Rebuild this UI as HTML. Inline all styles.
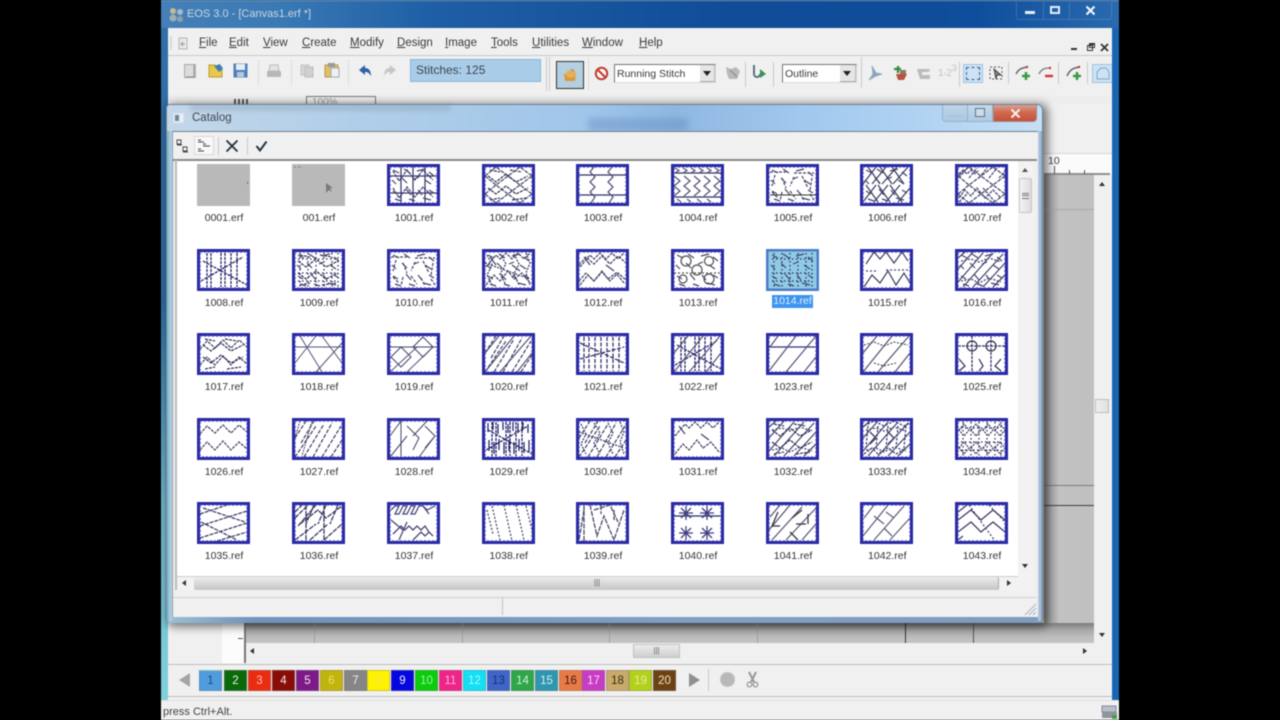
<!DOCTYPE html>
<html lang="en"><head><meta charset="utf-8"><title>EOS 3.0</title>
<style>
html,body{margin:0;padding:0;background:#000;width:1280px;height:720px;overflow:hidden}
*{box-sizing:border-box}
#r{position:absolute;left:0;top:0;width:1280px;height:720px;overflow:hidden;font-family:"Liberation Sans",sans-serif;color:#333;filter:blur(.5px)}
.a,.i,.m,.s,.ic{position:absolute}
.m{top:36px;font-size:11.5px;line-height:14px;color:#3a3a3a}
.i{width:54px;height:60px}
.i svg{position:absolute;left:0;top:0;width:53px;height:42px}
.i span{position:absolute;left:-10px;width:74px;top:47px;text-align:center;font-size:10.5px;line-height:14px;color:#333}
.s{top:670px;width:23px;height:21px;text-align:center;font-size:11.5px;line-height:21px;color:#eee;border:1px solid rgba(120,120,120,.35)}
.sep{position:absolute;width:1px;background:#c9c9c9}
.ic{overflow:visible}
defs g{stroke-width:1.25}
defs g#fr{stroke-width:1}
</style></head><body><div id="r">
<svg width="0" height="0" style="position:absolute"><defs>
<g id="fr"><rect x="1.500" y="1.500" width="50" height="39" fill="none" stroke="#2a2aa6" stroke-width="3.200"/><rect x="3.500" y="3.500" width="46" height="35" fill="none" stroke="#5c5cc4" stroke-width="1" stroke-dasharray="1 3"/></g>
<g id="a" fill="none" stroke="#45456e" stroke-width="1"><path d="M3 16 10 8 18 15 26 7 34 15 42 7 50 14M3 32 10 24 18 32 26 23 34 32 42 24 50 31" stroke-dasharray="3 1"/></g>
<g id="b" fill="none" stroke="#45456e"><path d="M3 20 14 3M9 25 22 3M3 39 24 8M12 39 32 6M21 39 40 5M30 39 49 8M39 39 50 22" stroke-dasharray="4 1.500"/></g>
<g id="c" fill="none" stroke="#55557a"><path d="M3 20 17 3M3 39 32 3M18 39 49 3M35 39 50 20"/></g>
<g id="c2" fill="none" stroke="#55557a"><path d="M3 14H50" stroke="#33337a"/><path d="M3 38 30 3M20 39 50 3M4 14 12 3M38 39 50 24"/></g>
<g id="d" fill="none" stroke="#44446a"><path d="M6 6 12 9M17 5 23 9M30 7 38 5M42 8 47 12M5 16 9 20M15 14 20 19M27 15 32 13M38 16 44 20M6 27 11 30M19 25 24 31M31 26 35 31M42 26 47 29M8 35 14 37M22 35 28 37M36 34 44 36" stroke-width="1.200"/></g>
<g id="d2" fill="none" stroke="#44446a"><path d="M4 8H20M28 9H48M9 11 6 22M16 14 20 24M28 13 24 22M36 12 42 24M46 14 44 26M6 28 12 34M16 28 14 37M24 27 30 35M34 29 38 37M44 30 48 36" stroke-dasharray="3 1.500"/></g>
<g id="e" fill="none" stroke="#22226e" stroke-width="1.600"><path d="M6 5V14M11 4V12M16 6V16M21 4V12M26 6V15M31 4V13M36 5V15M41 4V12M46 6V15M7 22V33M12 24V36M17 21V32M22 24V36M27 22V33M32 24V36M37 21V33M42 24V35M47 22V34"/></g>
<g id="f" fill="none" stroke="#3a3a70"><path d="M3 12H50M3 29H50M14 3V39M26 3V39M38 3V39"/><path d="M6 7 12 17 20 6 28 16 36 6 46 16M6 24 12 34 20 23 28 33 36 23 46 33" stroke-dasharray="3 1"/></g>
<g id="g" fill="none" stroke="#4a4a70"><path d="M3 12 14 3 26 12 38 3 50 12M3 12 14 21 26 12 38 21 50 12M3 30 14 21 26 30 38 21 50 30M3 30 14 39 26 30 38 39 50 30" stroke-dasharray="4 1"/></g>
<g id="g2" fill="none" stroke="#3d3d66"><path d="M3 20 16 3M12 20 26 3M22 20 37 3M33 20 48 3M8 3 20 20M20 3 32 20M32 3 44 20M3 38 16 21M14 38 28 21M26 38 40 21M38 38 50 24M6 21 18 38M18 21 30 38M30 21 42 38"/></g>
<g id="h" fill="none" stroke="#333366"><path d="M3 11H50M3 31H50" stroke-width="1.200"/><path d="M18 3 14 8 19 13 14 18 19 23 14 28 19 33 15 39M36 3 32 8 37 13 32 18 37 23 32 28 37 33 33 39" stroke="#55557a"/></g>
<g id="i" fill="none" stroke="#55557a"><path d="M3 9H50M3 33H50" stroke="#333366"/><path d="M4 4 8 6.500 4 9M12 4 16 6.500 12 9M20 4 24 6.500 20 9M28 4 32 6.500 28 9M36 4 40 6.500 36 9M44 4 48 6.500 44 9M3 12 9 17 3 22 9 27 3 32M13 12 19 17 13 22 19 27 13 32M23 12 29 17 23 22 29 27 23 32M33 12 39 17 33 22 39 27 33 32M43 12 49 17 43 22 49 27 43 32M6 35 10 38M16 35 20 38M26 35 30 38M36 35 40 38"/></g>
<g id="j" fill="none" stroke="#3d3d80"><path d="M3 14H50" stroke="#2a2a66"/><path d="M15 4V18M8 11H22M10 6 20 16M20 6 10 16M36 4V18M29 11H43M31 6 41 16M41 6 31 16M15 24V38M8 31H22M10 26 20 36M20 26 10 36M36 24V38M29 31H43M31 26 41 36M41 26 31 36"/></g>
<g id="k" fill="none" stroke="#33335c"><path d="M6 20 10 4 14 20M20 4 24 20 28 5M36 4 40 18 44 5M6 39 12 22 18 38M24 38 30 22 34 37M40 38 45 22 49 38M15 3V39M32 3V39"/></g>
<g id="l" fill="none" stroke="#44446a"><path d="M4 18 14 6 18 10 24 4 30 10 36 4 42 10 48 4M4 36 12 26 18 32 26 22 32 30 40 24 48 34" stroke-dasharray="3 1"/><path d="M8 8 14 16M30 16 38 22"/></g>
<g id="n" fill="none" stroke="#3d3d66"><path d="M3 24 50 9M3 12 30 3M3 36 50 21M20 39 50 30M6 6 48 20M4 20 40 38" stroke-dasharray="4 1"/></g>
<g id="o" fill="none" stroke="#444470"><path d="M3 9 10 3M3 20 18 3M3 33 28 4M8 38 38 4M18 38 48 5M28 38 50 14M38 38 50 26"/><path d="M6 12 16 10 24 13 34 9 46 13M6 32 16 30 24 34 34 29 46 33" stroke-dasharray="2 1.500" stroke-width="1.300"/></g>
<g id="q" fill="none" stroke="#44446a"><path d="M6 15 14 3 20 10 26 3 34 14 42 3 48 12M4 38 12 26 20 34 28 22 36 36 44 24 50 34"/><path d="M6 22H18M26 21H48" stroke-dasharray="2 2"/></g>
<g id="p" fill="none" stroke="#3d3d6a"><path d="M5 18 13 4 18 9 25 3M5 12 11 16 5 20M22 8 28 12 22 16M30 6 36 10 30 14M40 5 46 9 40 13M6 38 14 28 20 34 26 24 32 30 38 24 44 30M14 20 22 38M30 38 40 22"/></g>
<g id="u" fill="none" stroke="#33335c"><circle cx="17" cy="13" r="5"/><circle cx="36" cy="13" r="5"/><path d="M3 13H50M17 3V39M36 3V39" stroke-dasharray="3 1"/><path d="M4 26 10 33 4 38M46 26 40 33 46 38M24 26 28 33 24 38"/></g>
<g id="v" fill="none" stroke="#454575"><path d="M4 10 8 6 12 10 16 6 20 10 24 6M4 14 12 4M14 14 22 4M24 14 32 4M34 14 42 4M44 14 50 7M4 34 10 26 16 32 22 24 30 34 38 26 46 34M4 38 12 30M28 24 40 38" stroke-dasharray="3 1"/></g>
<g id="w" fill="none" stroke="#33336a"><path d="M4 8 14 3 24 8 34 3 44 8 50 5M4 36 12 30 18 36 28 30 36 36 46 30M8 8 6 30M18 8 16 30M28 8 26 30M38 8 36 30M46 8 44 30" stroke-dasharray="2.500 1.500" stroke-width="1.200"/><path d="M10 14 16 20 10 26M28 14 34 20 28 26"/></g>
<g id="x" fill="none" stroke="#3d3d66"><path d="M5 6 10 16 5 26 10 36M18 5 24 15 18 25 24 36M32 5 37 15 32 25 37 36M44 4 48 14 44 24 48 36M3 14 48 30" stroke-dasharray="2 1.200"/></g>
<g id="y" fill="none" stroke="#3d3d6a"><path d="M3 18 16 8 26 18 38 8 50 18M3 30 16 20 26 30 38 20 50 30M3 38 8 34M12 3 3 10"/><path d="M14 3 40 39M34 3 50 20" stroke-dasharray="2 2"/></g>
<g id="z" fill="none" stroke="#3d3d66"><path d="M4 12 9 6 14 12 9 18ZM16 12 21 6 26 12 21 18ZM28 12 33 6 38 12 33 18ZM40 12 45 6 50 12 45 18ZM4 30 9 24 14 30 9 36ZM16 30 21 24 26 30 21 36ZM28 30 33 24 38 30 33 36ZM40 30 45 24 50 30 45 36Z" stroke-dasharray="2 1"/></g>
<g id="b2" fill="none" stroke="#33335c"><path d="M3 10 10 3M3 16 16 3M6 24 24 3M22 3 14 22M34 3 26 22M46 3 38 22M8 22 26 8 34 16 50 4M3 38 24 22M18 38 36 22M32 38 50 22M14 3V39M32 3V39" stroke-dasharray="5 1"/></g>
<g id="b3" fill="none" stroke="#44447a"><path d="M4 8 8 4H12L8 12H12L16 4H20L16 12H20L24 4H28L24 12H28L32 4H36L42 12M36 4 40 8 48 4M4 18 16 28M20 20 12 38M6 32 14 24 18 28 22 24 26 28 30 24 34 28 38 24 42 30M26 38 34 30 38 34 42 30 46 34"/></g>
<g id="b4" fill="none" stroke="#44446a" stroke-dasharray="2 1.700"><path d="M10 4 18 38M22 3 30 39M34 3 42 38M5 8 11 32M44 4 50 28"/></g>
<g id="q2" fill="none" stroke="#44446a"><path d="M8 3V39M8 8 3 38M14 3 21 34 28 14 38 38 48 8M18 8 34 3 42 20M25 3V12M38 8V18" stroke-dasharray="5 1.200"/></g>
<g id="c3" fill="none" stroke="#55557a"><path d="M4 15 14 3M3 28 24 3M6 38 36 5M20 38 50 6M36 38 50 22"/><path d="M12 10 6 24H14M26 16 36 8M30 22 40 22M24 30 32 38M42 12V22" stroke="#333"/></g>
<g id="c4" fill="none" stroke="#60607a"><path d="M4 16 14 3M3 34 28 3M14 38 44 4M30 38 50 16M14 14 24 22M26 10 34 16M24 26 32 34"/></g>
<g id="s1" fill="none" stroke="#2f2f5a" stroke-width="1.200"><path d="M6 10H46M6 24H46M6 32H46M8 4V38M16 4V38M24 4V38M32 4V38M40 4V38M46 4V38" stroke-dasharray="1.500 2.500"/></g>
<g id="s2" fill="none" stroke="#2f2f68" stroke-width="1.400"><path d="M8 4V38M13 4V38M19 4V38M25 4V38M31 4V38M37 4V38M43 4V38M4 10 48 30M4 26 48 14" stroke-dasharray="4 1.500"/></g>
<g id="s3" fill="none" stroke="#1e1e66" stroke-width="1.500"><path d="M10 4V38M14 4V38M24 4V38M28 4V38M34 4V38M40 4V38M6 12 50 36M4 32 46 8" stroke-dasharray="3 1"/></g>
<g id="s4" fill="none" stroke="#33335a" stroke-width="1.500"><path d="M6 12 14 18 24 10 34 18 46 12M6 24 14 30 24 22 34 30 46 24M8 6 18 8M28 6 40 8M8 36 18 34M30 36 44 34" stroke-dasharray="3 1"/></g>
<g id="s5" fill="#3a3a70"><circle cx="15" cy="12" r="5" fill="none" stroke="#555"/><circle cx="38" cy="12" r="4.500" fill="none" stroke="#555"/><circle cx="26" cy="21" r="5" fill="none" stroke="#555"/><circle cx="12" cy="30" r="4" fill="none" stroke="#555"/><circle cx="38" cy="30" r="5" fill="none" stroke="#555"/><path d="M3 24H50" fill="none" stroke="#555" stroke-dasharray="2 2"/></g>
</defs></svg>

<!-- main window -->
<div class="a" style="left:161px;top:0;width:958px;height:720px;background:linear-gradient(90deg,#2f6ea6,#2f6ea6 7px,#1a6ab9 7px)"></div>
<div class="a" style="left:161px;top:300px;width:7px;height:400px;background:linear-gradient(180deg,#2f6ea6,#6fb9cf 50%,#7fd0de)"></div>
<div class="a" style="left:1112px;top:28px;width:7px;height:672px;background:#1765b3"></div>
<div class="a" style="left:161px;top:0;width:958px;height:28px;border-top:1px solid #7aa6d2;background:linear-gradient(90deg,#4580b7 0,#3a7ab5 12%,#1f5fa6 28%,#104c98 60%,#0f4e9c 85%,#2a6aae 100%)"></div>
<!-- app icon -->
<svg class="ic" style="left:168px;top:7px" width="17" height="16"><circle cx="5" cy="4" r="3" fill="#c9b98c"/><circle cx="12" cy="5" r="3" fill="#a8b8c4"/><circle cx="5" cy="11" r="3.500" fill="#9eb0b4"/><circle cx="12" cy="12" r="3" fill="#8aa0a8"/></svg>
<div class="a" style="left:187px;top:7px;font-size:11px;line-height:15px;color:#cbd6e2">EOS 3.0 - [Canvas1.erf *]</div>
<!-- caption buttons -->
<div class="a" style="left:1016px;top:2px;width:96px;height:18px;border:1px solid rgba(170,200,230,.22);border-top:0;border-radius:0 0 3px 3px"></div>
<div class="a" style="left:1043px;top:2px;width:1px;height:17px;background:rgba(170,200,230,.22)"></div>
<div class="a" style="left:1069px;top:2px;width:1px;height:17px;background:rgba(170,200,230,.22)"></div>
<div class="a" style="left:1025px;top:11px;width:10px;height:3px;background:#e6eef6"></div>
<div class="a" style="left:1050px;top:6px;width:10px;height:8px;border:2px solid #e6eef6"></div>
<svg class="ic" style="left:1085px;top:5px" width="11" height="11"><path d="M1.500 1.500 9.500 9.500M9.500 1.500 1.500 9.500" stroke="#eef3f8" stroke-width="2.200"/></svg>

<!-- client -->
<div class="a" style="left:168px;top:28px;width:944px;height:672px;background:#f0f0f0"></div>
<div class="a" style="left:168px;top:55px;width:944px;height:1px;background:#c8c8c8"></div>
<div class="a" style="left:170px;top:36px;width:2px;height:14px;background:#d8d8d8"></div>
<svg class="ic" style="left:177px;top:37px" width="12" height="13"><path d="M2 1H10V12H2Z" fill="#e8e8e8" stroke="#b5b5b5"/><path d="M4 7H8M4 7 6 5M4 7 6 9" stroke="#999" fill="none"/></svg>
<div class="m" style="left:199px"><u>F</u>ile</div>
<div class="m" style="left:229px"><u>E</u>dit</div>
<div class="m" style="left:263px"><u>V</u>iew</div>
<div class="m" style="left:302px"><u>C</u>reate</div>
<div class="m" style="left:350px"><u>M</u>odify</div>
<div class="m" style="left:397px"><u>D</u>esign</div>
<div class="m" style="left:445px"><u>I</u>mage</div>
<div class="m" style="left:491px"><u>T</u>ools</div>
<div class="m" style="left:532px"><u>U</u>tilities</div>
<div class="m" style="left:582px"><u>W</u>indow</div>
<div class="m" style="left:639px"><u>H</u>elp</div>
<!-- mdi buttons -->
<div class="a" style="left:1071px;top:48px;width:6px;height:2px;background:#333"></div>
<div class="a" style="left:1087px;top:45px;width:6px;height:6px;border:1px solid #333;background:#f0f0f0"></div>
<div class="a" style="left:1089px;top:43px;width:6px;height:5px;border:1px solid #333;border-top-width:2px"></div>
<svg class="ic" style="left:1100px;top:43px" width="9" height="9"><path d="M1 1 8 8M8 1 1 8" stroke="#333" stroke-width="1.700"/></svg>

<!-- toolbar -->
<svg class="ic" style="left:183px;top:63px" width="14" height="16"><rect x="1.500" y="1.500" width="11" height="13" fill="#dcdcdc" stroke="#aaa"/><path d="M11 2V14H3" stroke="#888" fill="none"/></svg>
<svg class="ic" style="left:208px;top:62px" width="16" height="16"><path d="M1 3H7L8 5H14V15H1Z" fill="#e7c94e" stroke="#c09a30"/><path d="M6 4 12 2 15 7 11 10" fill="#3f7fb5"/></svg>
<svg class="ic" style="left:233px;top:63px" width="15" height="15"><rect x=".5" y=".5" width="14" height="14" fill="#4d80ba"/><rect x="3" y="1" width="9" height="6" fill="#e8eef5"/><rect x="4" y="9" width="7" height="5" fill="#b7c8da"/></svg>
<div class="sep" style="left:258px;top:60px;height:25px;background:#dcdcdc"></div>
<svg class="ic" style="left:266px;top:64px" width="16" height="14"><path d="M4 1H12L13 7H3Z" fill="#e4e4e4" stroke="#bbb"/><rect x="1" y="7" width="14" height="6" rx="1" fill="#b4b8bc"/></svg>
<div class="sep" style="left:291px;top:60px;height:25px;background:#dcdcdc"></div>
<svg class="ic" style="left:300px;top:64px" width="15" height="14"><rect x="1" y="1" width="8" height="10" fill="#d6d6d6" stroke="#c4c4c4"/><rect x="5" y="3" width="8" height="10" fill="#d0d0d0" stroke="#bdbdbd"/></svg>
<svg class="ic" style="left:324px;top:62px" width="16" height="16"><rect x="1" y="3" width="13" height="12" fill="#dfc06a" stroke="#b89a48"/><rect x="4" y="1" width="7" height="4" fill="#999"/><rect x="7" y="6" width="8" height="9" fill="#eef0f4" stroke="#a8a8a8"/></svg>
<div class="sep" style="left:348px;top:60px;height:25px;background:#dcdcdc"></div>
<svg class="ic" style="left:358px;top:64px" width="14" height="13"><path d="M1 6 7 1V4C11 4 13 7 13 12 11 9 10 8 7 8V11Z" fill="#2f62a8"/></svg>
<svg class="ic" style="left:383px;top:64px" width="14" height="13"><path d="M13 6 7 1V4C3 4 1 7 1 12 3 9 4 8 7 8V11Z" fill="#c6c6c6"/></svg>
<div class="a" style="left:410px;top:59px;width:131px;height:23px;background:#a9cde9;border:1px solid #86b8e2;font-size:12px;line-height:21px;padding-left:5px;color:#3d4650">Stitches: 125</div>
<div class="sep" style="left:546px;top:57px;height:34px"></div><div class="sep" style="left:549px;top:57px;height:34px"></div>
<div class="a" style="left:556px;top:61px;width:28px;height:28px;background:#b3cfe0;border:1px solid #333"></div>
<svg class="ic" style="left:562px;top:67px" width="16" height="16"><path d="M2 7H14L13 14H3Z" fill="#d89a3c"/><ellipse cx="9" cy="7" rx="5" ry="4" fill="#e8ad56"/><path d="M9 2 12 4" stroke="#888"/></svg>
<div class="sep" style="left:588px;top:58px;height:32px;background:#dcdcdc"></div>
<svg class="ic" style="left:594px;top:66px" width="15" height="15"><circle cx="7.500" cy="7.500" r="5.700" fill="#f8f8f8" stroke="#c33c30" stroke-width="2"/><path d="M3.500 3.500 11.500 11.500" stroke="#c33c30" stroke-width="2"/></svg>
<div class="a" style="left:614px;top:64px;width:102px;height:19px;background:#fff;border:1px solid #d8d8d8;border-left:1px solid #777;border-top:1px solid #777;font-size:10.500px;line-height:18px;padding-left:2px;color:#3a3a3a">Running Stitch</div>
<div class="a" style="left:700px;top:65px;width:15px;height:17px;background:#e6e6e6;border-bottom:1px solid #aaa;border-right:1px solid #bbb"></div>
<svg class="ic" style="left:703px;top:71px" width="9" height="5"><path d="M0 0H8L4 5Z" fill="#222"/></svg>
<svg class="ic" style="left:725px;top:65px" width="16" height="16"><path d="M1 2 6 4 11 2 15 6 12 14 4 14 2 9Z" fill="#b9b9b9"/><path d="M5 5 12 12" stroke="#888"/></svg>
<div class="sep" style="left:745px;top:62px;height:25px"></div>
<svg class="ic" style="left:750px;top:64px" width="17" height="18"><path d="M4 1V10A3 3 0 0 0 10 10" fill="none" stroke="#5a7088" stroke-width="2"/><path d="M10 5 16 10 10 14Z" fill="#3b8f55"/></svg>
<div class="sep" style="left:773px;top:62px;height:25px"></div>
<div class="a" style="left:782px;top:64px;width:75px;height:19px;background:#fff;border:1px solid #d8d8d8;border-left:1px solid #777;border-top:1px solid #777;font-size:10.500px;line-height:18px;padding-left:2px;color:#3a3a3a">Outline</div>
<div class="a" style="left:840px;top:65px;width:16px;height:17px;background:#e6e6e6;border-bottom:1px solid #aaa;border-right:1px solid #bbb"></div>
<svg class="ic" style="left:843px;top:71px" width="9" height="5"><path d="M0 0H8L4 5Z" fill="#222"/></svg>
<div class="sep" style="left:861px;top:57px;height:31px"></div>
<svg class="ic" style="left:867px;top:65px" width="16" height="16"><path d="M5 1 9 8 15 9 9 11 2 15 6 9Z" fill="#7fa6c8" stroke="#9ab"/></svg>
<svg class="ic" style="left:892px;top:64px" width="17" height="17"><path d="M6 2V9M2 5H9" stroke="#3a8a3e" stroke-width="2.300"/><path d="M4 10H15L12 16H6Z" fill="#b8533d"/><path d="M8 6H14V10H8Z" fill="#8a7a5a"/></svg>
<svg class="ic" style="left:916px;top:68px" width="15" height="12"><path d="M1 1H14L13 4H6V7H14V11H4Z" fill="#bcbcbc"/></svg>
<div class="a" style="left:938px;top:67px;font-size:10px;line-height:12px;color:#c2c2c2">1<span style="position:relative;top:-2px">,</span>2<span style="position:relative;top:-5px;font-size:9px">3</span></div>
<div class="sep" style="left:959px;top:62px;height:25px"></div>
<div class="a" style="left:963px;top:64px;width:20px;height:19px;background:#cde2f3;border:1px solid #9cc6e8"></div>
<div class="a" style="left:966px;top:67px;width:14px;height:13px;border:1px dashed #3a5f8a"></div>
<svg class="ic" style="left:988px;top:65px" width="16" height="16"><rect x="2" y="2" width="12" height="12" fill="none" stroke="#555" stroke-dasharray="2 2"/><path d="M6 4 13 10 9 10 8 14Z" fill="#888" stroke="#444"/></svg>
<div class="sep" style="left:1008px;top:62px;height:22px"></div>
<svg class="ic" style="left:1015px;top:65px" width="17" height="17"><path d="M1 9C4 3 8 3 12 2" fill="none" stroke="#666" stroke-width="1.500"/><path d="M11 7V15M7 11H15" stroke="#3a9a40" stroke-width="2.500"/><circle cx="12" cy="2" r="1.200" fill="#c33"/></svg>
<svg class="ic" style="left:1038px;top:65px" width="16" height="16"><path d="M1 9C4 3 8 3 12 3" fill="none" stroke="#888" stroke-width="1.500"/><path d="M7 11H15" stroke="#d33a3a" stroke-width="2.500"/><circle cx="12" cy="3" r="1.200" fill="#c33"/></svg>
<div class="sep" style="left:1058px;top:62px;height:22px"></div>
<svg class="ic" style="left:1066px;top:65px" width="17" height="17"><path d="M1 11C4 4 8 3 13 2" fill="none" stroke="#666" stroke-width="1.500"/><path d="M11 7V15M7 11H15" stroke="#3a9a40" stroke-width="2.500"/><circle cx="13" cy="2" r="1.200" fill="#c33"/></svg>
<div class="sep" style="left:1087px;top:62px;height:22px"></div>
<div class="a" style="left:1092px;top:64px;width:20px;height:19px;background:#cde2f3;border:1px solid #9cc6e8;border-right:0"></div>
<svg class="ic" style="left:1096px;top:67px" width="14" height="13"><path d="M1 12V5L5 1H10L13 5V12Z" fill="none" stroke="#7fa8cc"/></svg>

<!-- second toolbar hint -->
<div class="a" style="left:168px;top:96px;width:944px;height:8px;background:#ededed"></div>
<div class="a" style="left:306px;top:96px;width:70px;height:10px;border:1px solid #777;border-bottom:0;font-size:10px;line-height:12px;color:#999;padding-left:5px">100%</div>
<div class="a" style="left:234px;top:99px;width:16px;height:5px;background:repeating-linear-gradient(90deg,#555 0 2px,transparent 2px 4px)"></div>

<!-- canvas right -->
<div class="a" style="left:1044px;top:153px;width:68px;height:21px;background:#fbfbfb;border-top:1px solid #d4d4d4"></div>
<div class="a" style="left:1044px;top:173px;width:66px;height:2px;background:#8f8f8f"></div>
<div class="a" style="left:1048px;top:155px;font-size:10.500px;line-height:12px;color:#444">10</div>
<div class="a" style="left:1054px;top:166px;width:1px;height:8px;background:#555"></div>
<div class="a" style="left:1069px;top:170px;width:1px;height:4px;background:#555"></div>
<div class="a" style="left:1084px;top:170px;width:1px;height:4px;background:#555"></div>
<div class="a" style="left:1044px;top:175px;width:50px;height:468px;background:linear-gradient(90deg,#8d8d8d 0,#a8a8a8 6px,#b6b6b6 12px,#c2c2c2 15px,#c0c0c0 100%)"></div>
<div class="a" style="left:1044px;top:209px;width:50px;height:1px;background:#a9a9a9"></div>
<div class="a" style="left:1044px;top:485px;width:50px;height:1px;background:#7c7c7c"></div>
<div class="a" style="left:1044px;top:505px;width:50px;height:1px;background:#3e3e3e"></div>
<svg class="ic" style="left:1098px;top:181px" width="8" height="6"><path d="M4 1 7 5H1Z" fill="#333"/></svg>
<svg class="ic" style="left:1098px;top:632px" width="8" height="6"><path d="M4 5 7 1H1Z" fill="#333"/></svg>
<div class="a" style="left:1095px;top:399px;width:14px;height:14px;background:linear-gradient(90deg,#efefef,#e0e0e0);border:1px solid #bcbcbc"></div>

<!-- bottom canvas -->
<div class="a" style="left:222px;top:623px;width:23px;height:40px;background:#fcfcfc"></div>
<div class="a" style="left:244px;top:623px;width:2px;height:40px;background:#777"></div>
<div class="a" style="left:238px;top:638px;width:5px;height:1px;background:#555"></div>
<div class="a" style="left:246px;top:623px;width:848px;height:20px;background:linear-gradient(180deg,#7e7e7e 0,#a8a8a8 7px,#bdbdbd 14px,#c3c3c3)"></div>
<div class="a" style="left:314px;top:623px;width:1px;height:20px;background:#a0a0a0"></div>
<div class="a" style="left:462px;top:623px;width:1px;height:20px;background:#a0a0a0"></div>
<div class="a" style="left:609px;top:623px;width:1px;height:20px;background:#a0a0a0"></div>
<div class="a" style="left:757px;top:623px;width:1px;height:20px;background:#a0a0a0"></div>
<div class="a" style="left:905px;top:623px;width:1px;height:20px;background:#333"></div>
<div class="a" style="left:973px;top:623px;width:1px;height:20px;background:#555"></div>
<svg class="ic" style="left:249px;top:647px" width="6" height="8"><path d="M1 4 5 1V7Z" fill="#333"/></svg>
<svg class="ic" style="left:1082px;top:647px" width="6" height="8"><path d="M5 4 1 1V7Z" fill="#333"/></svg>
<div class="a" style="left:633px;top:644px;width:47px;height:14px;background:linear-gradient(180deg,#ececec,#cfcfcf);border:1px solid #c2c2c2;font-size:8px;line-height:11px;text-align:center;color:#666">|||</div>
<div class="a" style="left:168px;top:664px;width:944px;height:1px;background:#bdbdbd"></div>
<div class="a" style="left:168px;top:696px;width:944px;height:1px;background:#bdbdbd"></div>
<div class="a" style="left:161px;top:700px;width:958px;height:20px;background:#f0f0f0;border-top:1px solid #e0e0e0"></div>

<!-- palette -->
<svg class="ic" style="left:178px;top:672px" width="13" height="16"><path d="M12 1V15L1 8Z" fill="#a6a6a6"/></svg>
<div class="s" style="left:199px;background:#4f9ddd;color:#234b7a;border-top:1px solid #8bb">1</div>
<div class="s" style="left:224px;background:#0a6a0a">2</div>
<div class="s" style="left:248px;background:#ea2d12;color:#f4c0a8">3</div>
<div class="s" style="left:272px;background:#8a0c08">4</div>
<div class="s" style="left:296px;background:#7e1a88">5</div>
<div class="s" style="left:320px;background:#c2b40e;color:#eedd66">6</div>
<div class="s" style="left:344px;background:#868686">7</div>
<div class="s" style="left:367px;background:#fff200;color:#f6e64c">8</div>
<div class="s" style="left:391px;background:#0606e0">9</div>
<div class="s" style="left:415px;background:#0ccc0c;color:#9ef09e">10</div>
<div class="s" style="left:439px;background:#ee2488;color:#fbb6d8">11</div>
<div class="s" style="left:463px;background:#12e0f4;color:#a8f4fa">12</div>
<div class="s" style="left:487px;background:#3e66c6;color:#1b2d78">13</div>
<div class="s" style="left:511px;background:#30a64a;color:#d2f0d8">14</div>
<div class="s" style="left:535px;background:#2f96b0;color:#d6eef4">15</div>
<div class="s" style="left:559px;background:#e87a48;color:#3e2010">16</div>
<div class="s" style="left:582px;background:#c83cc4;color:#f6d4f4">17</div>
<div class="s" style="left:606px;background:#c8aa6c;color:#3a2c10">18</div>
<div class="s" style="left:629px;background:#b4d01e;color:#e4f090;width:23px">19</div>
<div class="s" style="left:653px;background:#6c4214;color:#f4e2c0">20</div>
<svg class="ic" style="left:688px;top:672px" width="13" height="16"><path d="M1 1V15L12 8Z" fill="#8f8f8f"/></svg>
<div class="sep" style="left:708px;top:669px;height:22px"></div>
<div class="a" style="left:720px;top:672px;width:15px;height:15px;border-radius:7px;background:#b8b8b8;border:1px solid #c8c8c8"></div>
<svg class="ic" style="left:746px;top:671px" width="13" height="17"><path d="M3 1 8 11M10 1 5 11" stroke="#9a9a9a" stroke-width="2" fill="none"/><circle cx="3.500" cy="13.500" r="2.300" fill="none" stroke="#9a9a9a" stroke-width="1.300"/><circle cx="9.500" cy="13.500" r="2.300" fill="none" stroke="#9a9a9a" stroke-width="1.300"/></svg>
<div class="a" style="left:163px;top:705px;font-size:11px;line-height:14px;color:#444;white-space:nowrap">press Ctrl+Alt.</div>
<svg class="ic" style="left:1101px;top:705px" width="17" height="15"><rect x="1" y="1" width="14" height="6" fill="#b8c0c8" stroke="#889"/><rect x="1" y="7" width="15" height="6" rx="1" fill="#8f959b"/><rect x="11" y="10" width="5" height="4" fill="#4a9a4a"/></svg>

<!-- dialog shadow & frame -->
<div class="a" style="left:166px;top:104px;width:877px;height:519px;border-radius:4px 6px 5px 5px;box-shadow:3px 2px 9px 2px rgba(0,0,0,.5);background:#a9c6e0;border:1px solid #6f8296"></div>
<div class="a" style="left:167px;top:105px;width:875px;height:26px;border-radius:3px 5px 0 0;background:linear-gradient(90deg,#c3d7e9 0,#b2cfe9 20%,#a0c6ea 48%,#8fb7e0 58%,#a0c8ee 72%,#b8d8f4 92%,#c6dff6 100%)"></div>
<div class="a" style="left:167px;top:617px;width:875px;height:6px;background:linear-gradient(90deg,#9cc0d4,#6f93bd 10%,#7f9fc6 60%,#7f9cc0);border-radius:0 0 4px 4px"></div>
<div class="a" style="left:1038px;top:131px;width:4px;height:490px;background:linear-gradient(90deg,#b9cfe4,#8fa9c8)"></div>
<div class="a" style="left:167px;top:131px;width:5px;height:490px;background:linear-gradient(90deg,#7fb4c8,#b9d8e8)"></div>
<!-- blurred ghost behind title -->
<div class="a" style="left:190px;top:104px;width:260px;height:7px;background:rgba(110,130,150,.25);filter:blur(2px)"></div>
<div class="a" style="left:588px;top:118px;width:100px;height:13px;background:rgba(90,130,190,.35);filter:blur(3px)"></div>
<div class="a" style="left:173px;top:113px;width:11px;height:10px;border:1px solid #d8e2ec;background:#e8eef4"></div>
<div class="a" style="left:175px;top:115px;width:4px;height:6px;background:#6f8898"></div>
<div class="a" style="left:192px;top:111px;font-size:11.500px;line-height:15px;color:#3d4854">Catalog</div>
<!-- dialog caption buttons -->
<div class="a" style="left:942px;top:105px;width:26px;height:17px;background:linear-gradient(180deg,#bfd4e8,#a9c8e4);border:1px solid #9ab0c4;border-top:0;border-radius:0 0 0 4px"></div>
<div class="a" style="left:948px;top:115px;width:14px;height:2px;background:#b0c4d4"></div>
<div class="a" style="left:967px;top:105px;width:26px;height:17px;background:linear-gradient(180deg,#c4d8ea,#aecae4);border:1px solid #9ab0c4;border-top:0"></div>
<div class="a" style="left:975px;top:108px;width:10px;height:9px;border:1px solid #5f7488;background:#cfdcea"></div>
<div class="a" style="left:993px;top:105px;width:44px;height:17px;background:linear-gradient(180deg,#d9a294,#cf6a50 45%,#c4503a);border:1px solid #a8877f;border-top:0;border-radius:0 0 4px 0"></div>
<svg class="ic" style="left:1010px;top:108px" width="11" height="11"><path d="M1.500 1.500 9.500 9.500M9.500 1.500 1.500 9.500" stroke="#f4ece8" stroke-width="2.200"/></svg>

<!-- dialog body -->
<div class="a" style="left:172px;top:131px;width:866px;height:486px;background:#f0f0f0;border-top:1px solid #6f7f8c;border-left:1px solid #8f9aa4"></div>
<div class="a" style="left:173px;top:159px;width:864px;height:2px;background:#8a8a8a"></div>
<div class="a" style="left:175px;top:160px;width:2px;height:430px;background:#bbb"></div>
<div class="a" style="left:177px;top:161px;width:841px;height:415px;background:#fff"></div>
<div class="a" style="left:1018px;top:161px;width:16px;height:415px;background:#f2f2f2"></div>
<!-- catalog toolbar -->
<svg class="ic" style="left:175px;top:138px" width="15" height="16"><path d="M2 2H6V6H2ZM2 7H7M8 9H12V13H8ZM8 14H13" stroke="#444" fill="none" stroke-width=".9"/></svg>
<div class="a" style="left:194px;top:136px;width:20px;height:19px;background:#f8f8f8;border:1px solid #d8d8d8"></div>
<svg class="ic" style="left:196px;top:139px" width="16" height="14"><path d="M2 1H5M2 3H8M7 5H10M7 7H14M2 10H5M2 12H8" stroke="#444" stroke-width="1"/></svg>
<div class="sep" style="left:218px;top:137px;height:18px"></div>
<svg class="ic" style="left:225px;top:139px" width="14" height="14"><path d="M1.500 1.500 12.500 12.500M12.500 1.500 1.500 12.500" stroke="#2a3440" stroke-width="1.900"/></svg>
<div class="sep" style="left:247px;top:137px;height:18px"></div>
<svg class="ic" style="left:255px;top:140px" width="13" height="12"><path d="M1.500 6 5 10.500 11.500 1.500" fill="none" stroke="#2a3440" stroke-width="2"/></svg>
<!-- v scrollbar -->
<svg class="ic" style="left:1021px;top:167px" width="8" height="6"><path d="M4 1 7 5H1Z" fill="#555"/></svg>
<div class="a" style="left:1019px;top:178px;width:13px;height:35px;background:linear-gradient(90deg,#f4f4f4,#dcdcdc);border:1px solid #c6c6c6;border-radius:2px"></div>
<div class="a" style="left:1022px;top:193px;width:7px;height:6px;border-top:1px solid #777;border-bottom:1px solid #777"></div>
<div class="a" style="left:1022px;top:195px;width:7px;height:1px;background:#777"></div>
<svg class="ic" style="left:1021px;top:563px" width="8" height="6"><path d="M4 5 7 1H1Z" fill="#333"/></svg>
<!-- h scrollbar -->
<div class="a" style="left:177px;top:576px;width:857px;height:15px;background:#f2f2f2"></div>
<div class="a" style="left:177px;top:576px;width:841px;height:1px;background:#cfcfcf"></div>
<svg class="ic" style="left:181px;top:579px" width="6" height="8"><path d="M1 4 5 1V7Z" fill="#333"/></svg>
<svg class="ic" style="left:1006px;top:579px" width="6" height="8"><path d="M5 4 1 1V7Z" fill="#333"/></svg>
<div class="a" style="left:194px;top:577px;width:805px;height:13px;background:linear-gradient(180deg,#ededed,#d8d8d8 50%,#c6c6c6);border-radius:2px;border-right:1px solid #aaa;font-size:8px;line-height:11px;text-align:center;color:#666;padding-left:2px">|||</div>
<!-- status -->
<div class="a" style="left:173px;top:597px;width:864px;height:1px;background:#cfcfcf"></div>
<div class="a" style="left:502px;top:597px;width:1px;height:18px;background:#c4c4c4"></div>
<svg class="ic" style="left:1024px;top:603px" width="13" height="13"><path d="M1 12 12 1M5 12 12 5M9 12 12 9" stroke="#a9b6c2"/></svg>

<!-- thumbs -->
<div class="i" style="left:197px;top:164px"><svg viewBox="0 0 53 42"><rect width="53" height="42" fill="#b9b9b9"/><rect x="50" y="18" width="1" height="2" fill="#666"/></svg><span>0001.erf</span></div>
<div class="i" style="left:292px;top:164px"><svg viewBox="0 0 53 42"><rect width="53" height="42" fill="#b9b9b9"/><path d="M2 3H4M6 3H9" stroke="#888"/><path d="M34 19V29L37 26 40 28 38 24H41Z" fill="#7a7a7a"/></svg><span>001.erf</span></div>
<div class="i" style="left:387px;top:164px"><svg viewBox="0 0 53 42"><use href="#f"/><use href="#d"/><use href="#fr"/></svg><span>1001.ref</span></div>
<div class="i" style="left:481.700px;top:164px"><svg viewBox="0 0 53 42"><use href="#g"/><use href="#s4"/><use href="#fr"/></svg><span>1002.ref</span></div>
<div class="i" style="left:576px;top:164px"><svg viewBox="0 0 53 42"><use href="#h"/><use href="#fr"/></svg><span>1003.ref</span></div>
<div class="i" style="left:671px;top:164px"><svg viewBox="0 0 53 42"><use href="#i"/><use href="#fr"/></svg><span>1004.ref</span></div>
<div class="i" style="left:766px;top:164px"><svg viewBox="0 0 53 42"><use href="#d"/><use href="#d2"/><path d="M4 31H50" stroke="#333"/><use href="#fr"/></svg><span>1005.ref</span></div>
<div class="i" style="left:860.300px;top:164px"><svg viewBox="0 0 53 42"><use href="#g2"/><use href="#d"/><use href="#fr"/></svg><span>1006.ref</span></div>
<div class="i" style="left:955px;top:164px"><svg viewBox="0 0 53 42"><use href="#v"/><use href="#g"/><use href="#fr"/></svg><span>1007.ref</span></div>

<div class="i" style="left:197px;top:248.500px"><svg viewBox="0 0 53 42"><use href="#s3"/><use href="#fr"/></svg><span>1008.ref</span></div>
<div class="i" style="left:292px;top:248.500px"><svg viewBox="0 0 53 42"><use href="#s4"/><use href="#s1"/><use href="#d"/><use href="#fr"/></svg><span>1009.ref</span></div>
<div class="i" style="left:387px;top:248.500px"><svg viewBox="0 0 53 42"><use href="#d2"/><use href="#d"/><use href="#fr"/></svg><span>1010.ref</span></div>
<div class="i" style="left:481.700px;top:248.500px"><svg viewBox="0 0 53 42"><use href="#d"/><use href="#l"/><use href="#x"/><use href="#fr"/></svg><span>1011.ref</span></div>
<div class="i" style="left:576px;top:248.500px"><svg viewBox="0 0 53 42"><use href="#l"/><use href="#a"/><use href="#fr"/></svg><span>1012.ref</span></div>
<div class="i" style="left:671px;top:248.500px"><svg viewBox="0 0 53 42"><use href="#s5"/><use href="#d"/><use href="#fr"/></svg><span>1013.ref</span></div>
<div class="i" style="left:766px;top:248.500px"><svg viewBox="0 0 53 42"><rect width="53" height="42" fill="#8fcbe6"/><use href="#d"/><use href="#s1"/><rect x="1" y="1" width="51" height="40" fill="none" stroke="#4a7cc8" stroke-width="3"/></svg><span style="left:6px;width:41px;background:#3e95ee;color:#dff0ff;top:46.500px;height:13px;line-height:13px">1014.ref</span></div>
<div class="i" style="left:860.300px;top:248.500px"><svg viewBox="0 0 53 42"><use href="#q"/><use href="#fr"/></svg><span>1015.ref</span></div>
<div class="i" style="left:955px;top:248.500px"><svg viewBox="0 0 53 42"><use href="#o"/><use href="#d"/><use href="#fr"/></svg><span>1016.ref</span></div>

<div class="i" style="left:197px;top:333px"><svg viewBox="0 0 53 42"><use href="#a"/><use href="#s4"/><use href="#fr"/></svg><span>1017.ref</span></div>
<div class="i" style="left:292px;top:333px"><svg viewBox="0 0 53 42"><path d="M3 14H50M8 3 30 39M30 3 50 30M3 30 24 3M24 39 50 10" fill="none" stroke="#55557a"/><use href="#fr"/></svg><span>1018.ref</span></div>
<div class="i" style="left:387px;top:333px"><svg viewBox="0 0 53 42"><path d="M3 14H50M4 24 14 14 24 24 14 34ZM26 14 36 4 46 14 36 24Z" fill="none" stroke="#44446a"/><path d="M3 39 30 14M20 39 46 14" stroke="#55557a" fill="none"/><use href="#fr"/></svg><span>1019.ref</span></div>
<div class="i" style="left:481.700px;top:333px"><svg viewBox="0 0 53 42"><use href="#b"/><use href="#c"/><use href="#fr"/></svg><span>1020.ref</span></div>
<div class="i" style="left:576px;top:333px"><svg viewBox="0 0 53 42"><use href="#s2"/><use href="#fr"/></svg><span>1021.ref</span></div>
<div class="i" style="left:671px;top:333px"><svg viewBox="0 0 53 42"><use href="#s3"/><use href="#c"/><use href="#fr"/></svg><span>1022.ref</span></div>
<div class="i" style="left:766px;top:333px"><svg viewBox="0 0 53 42"><use href="#c2"/><use href="#fr"/></svg><span>1023.ref</span></div>
<div class="i" style="left:860.300px;top:333px"><svg viewBox="0 0 53 42"><use href="#c"/><path d="M4 12 14 9 24 13 34 9 48 12M14 30 24 33 36 30" stroke="#333" stroke-dasharray="2 1.500" fill="none"/><use href="#fr"/></svg><span>1024.ref</span></div>
<div class="i" style="left:955px;top:333px"><svg viewBox="0 0 53 42"><use href="#u"/><use href="#fr"/></svg><span>1025.ref</span></div>

<div class="i" style="left:197px;top:417.500px"><svg viewBox="0 0 53 42"><use href="#a"/><use href="#fr"/></svg><span>1026.ref</span></div>
<div class="i" style="left:292px;top:417.500px"><svg viewBox="0 0 53 42"><use href="#b"/><path d="M8 3 3 20M20 3 10 38" stroke="#445" fill="none" stroke-dasharray="2 1"/><use href="#fr"/></svg><span>1027.ref</span></div>
<div class="i" style="left:387px;top:417.500px"><svg viewBox="0 0 53 42"><path d="M3 18 14 3M14 3V39M3 39 20 18M26 18 40 3M20 8 32 20 26 32M32 39 48 18M38 8 48 18 38 30" fill="none" stroke="#44446a"/><use href="#fr"/></svg><span>1028.ref</span></div>
<div class="i" style="left:481.700px;top:417.500px"><svg viewBox="0 0 53 42"><use href="#e"/><use href="#s3"/><use href="#fr"/></svg><span>1029.ref</span></div>
<div class="i" style="left:576px;top:417.500px"><svg viewBox="0 0 53 42"><use href="#b"/><use href="#x"/><use href="#fr"/></svg><span>1030.ref</span></div>
<div class="i" style="left:671px;top:417.500px"><svg viewBox="0 0 53 42"><use href="#l"/><use href="#fr"/></svg><span>1031.ref</span></div>
<div class="i" style="left:766px;top:417.500px"><svg viewBox="0 0 53 42"><use href="#o"/><use href="#s4"/><use href="#fr"/></svg><span>1032.ref</span></div>
<div class="i" style="left:860.300px;top:417.500px"><svg viewBox="0 0 53 42"><use href="#w"/><use href="#o"/><use href="#fr"/></svg><span>1033.ref</span></div>
<div class="i" style="left:955px;top:417.500px"><svg viewBox="0 0 53 42"><use href="#z"/><use href="#s1"/><use href="#fr"/></svg><span>1034.ref</span></div>

<div class="i" style="left:197px;top:502px"><svg viewBox="0 0 53 42"><use href="#n"/><use href="#fr"/></svg><span>1035.ref</span></div>
<div class="i" style="left:292px;top:502px"><svg viewBox="0 0 53 42"><use href="#b2"/><use href="#fr"/></svg><span>1036.ref</span></div>
<div class="i" style="left:387px;top:502px"><svg viewBox="0 0 53 42"><use href="#b3"/><use href="#fr"/></svg><span>1037.ref</span></div>
<div class="i" style="left:481.700px;top:502px"><svg viewBox="0 0 53 42"><use href="#b4"/><use href="#fr"/></svg><span>1038.ref</span></div>
<div class="i" style="left:576px;top:502px"><svg viewBox="0 0 53 42"><use href="#q2"/><use href="#fr"/></svg><span>1039.ref</span></div>
<div class="i" style="left:671px;top:502px"><svg viewBox="0 0 53 42"><use href="#j"/><use href="#fr"/></svg><span>1040.ref</span></div>
<div class="i" style="left:766px;top:502px"><svg viewBox="0 0 53 42"><use href="#c3"/><use href="#fr"/></svg><span>1041.ref</span></div>
<div class="i" style="left:860.300px;top:502px"><svg viewBox="0 0 53 42"><use href="#c4"/><use href="#fr"/></svg><span>1042.ref</span></div>
<div class="i" style="left:955px;top:502px"><svg viewBox="0 0 53 42"><use href="#y"/><use href="#fr"/></svg><span>1043.ref</span></div>
</div></body></html>
